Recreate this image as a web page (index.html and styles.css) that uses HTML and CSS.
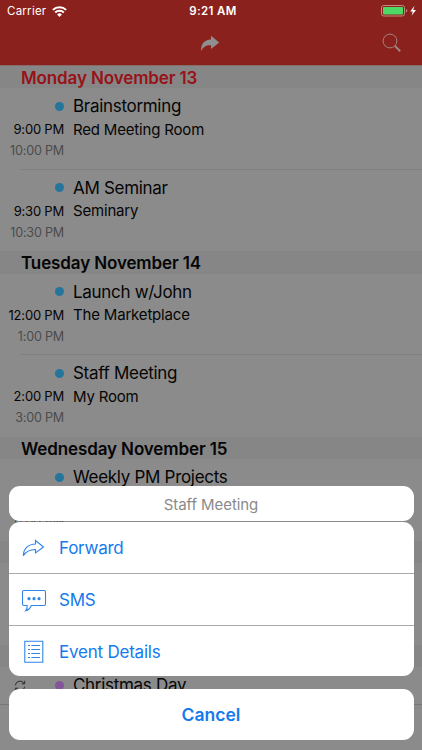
FILE: index.html
```
<!DOCTYPE html>
<html lang="en">
<head>
<meta charset="utf-8">
<title>Calendar</title>
<link rel="stylesheet" href="styles.css">
</head>
<body>
<div class="screen">
  <header class="header">
    <div class="status">
      <div class="carrier"><span>Carrier</span>
        <svg width="15" height="11" viewBox="0 0 15 11"><g fill="none" stroke="#fff" stroke-width="2"><path d="M.9 3.9a9.4 9.4 0 0 1 13.2 0"/><path d="M3.2 6.5a6.1 6.1 0 0 1 8.6 0"/></g><path d="M7.5 10.9 5.1 8.4a3.4 3.4 0 0 1 4.8 0z" fill="#fff"/></svg>
      </div>
      <div class="clock">9:21 AM</div>
      <div class="battery">
        <svg width="36" height="12" viewBox="0 0 36 12"><rect x=".5" y=".5" width="23" height="10.5" rx="2.2" fill="none" stroke="#c58c80"/><rect x="2" y="2" width="20" height="7.5" rx=".8" fill="#4cd964"/><path d="M25 4v3.5q1.3-.5 1.3-1.75T25 4z" fill="#c58c80"/><path d="M33.5.8 29.2 6.5h2.6l-1.3 4.3L35 5h-2.8z" fill="#fff"/></svg>
      </div>
    </div>
    <div class="nav">
      <svg class="share" width="20" height="17" viewBox="0 0 20 17"><path d="M11 .8 19.2 7.5 11 14v-3.7C6.2 10 3 11.8 1.2 16.3.6 9.3 4.2 4.7 11 4.5z" fill="#8f8f8f"/></svg>
      <svg class="search" width="20" height="20" viewBox="0 0 20 20" fill="none" stroke="#a3827e"><circle cx="8" cy="8" r="6.9" stroke-width="1"/><path d="m13 13 5.2 5.2" stroke-width="2"/></svg>
    </div>
  </header>
  <main class="agenda">
    <h2 class="day today">Monday November 13</h2>
    <div class="event"><i class="dot"></i><b class="title">Brainstorming</b><span class="start">9:00 PM</span><span class="place">Red Meeting Room</span><span class="end">10:00 PM</span></div>
    <div class="event"><i class="dot"></i><b class="title">AM Seminar</b><span class="start">9:30 PM</span><span class="place">Seminary</span><span class="end">10:30 PM</span></div>
    <h2 class="day">Tuesday November 14</h2>
    <div class="event"><i class="dot"></i><b class="title">Launch w/John</b><span class="start">12:00 PM</span><span class="place">The Marketplace</span><span class="end">1:00 PM</span></div>
    <div class="event"><i class="dot"></i><b class="title">Staff Meeting</b><span class="start">2:00 PM</span><span class="place">My Room</span><span class="end">3:00 PM</span></div>
    <h2 class="day">Wednesday November 15</h2>
    <div class="event"><i class="dot"></i><b class="title">Weekly PM Projects</b><span class="start"></span><span class="place"></span><span class="end">11:00 AM</span></div>
    <h2 class="day"></h2>
    <div class="event"></div>
    <h2 class="day"></h2>
    <div class="event allday"><svg class="repeat" width="12" height="12" viewBox="0 0 12 12" fill="none" stroke="#2b2b2b"><path d="M1.3 5.3A4.8 4.8 0 0 1 10 3.2M10.7.8v3H7.8M10.7 6.7A4.8 4.8 0 0 1 2 8.8M1.3 11.2v-3h2.9"/></svg><i class="dot purple"></i><b class="title">Christmas Day</b></div>
  </main>
</div>
<div class="sheet">
  <div class="caption">Staff Meeting</div>
  <div class="actions">
    <div class="action">
      <svg width="26" height="24" viewBox="0 0 26 24"><path d="M14.5 4.5 22.5 11l-8 6v-3.5c-6 0-9.5 1.5-12.2 6.3C2.5 12.5 7.5 8.1 14.5 8z"/></svg>
      <span>Forward</span>
    </div>
    <div class="action">
      <svg width="26" height="24" viewBox="0 0 26 24"><path d="M3 2.5h20q1.5 0 1.5 1.5v12q0 1.5-1.5 1.5H10.3Q8.5 22 4.7 22.7q1.8-2.1 1.5-5.2H3q-1.5 0-1.5-1.5V4Q1.5 2.5 3 2.5z"/><g class="solid"><circle cx="8" cy="10.7" r="1.6"/><circle cx="13" cy="10.7" r="1.6"/><circle cx="18" cy="10.7" r="1.6"/></g></svg>
      <span>SMS</span>
    </div>
    <div class="action">
      <svg width="26" height="24" viewBox="0 0 26 24"><path d="M3.8 1.2h18v21h-18z"/><path d="M7 5.5h2M7 9.5h2M7 13.5h2M7 17.5h2M10.3 5.5H19M10.3 9.5H19M10.3 13.5H19M10.3 17.5H19"/></svg>
      <span>Event Details</span>
    </div>
  </div>
  <div class="cancel">Cancel</div>
</div>
</body>
</html>
```
FILE: styles.css
```
* { box-sizing: border-box; }
body { margin: 0; width: 422px; height: 750px; overflow: hidden; position: relative; background: #8b8b8b; font-family: Inter, "Liberation Sans", sans-serif; color: #050505; }
svg { display: block; }
.screen { height: 750px; overflow: hidden; }
.header { height: 65.5px; background: #8b211c; border-bottom: 1px solid #866d6c; }
.status { height: 22px; display: grid; grid-template-columns: 1fr 1fr 1fr; align-items: center; color: #fff; font-size: 11.5px; }
.carrier { display: flex; align-items: center; gap: 6px; padding-left: 7px; letter-spacing: .25px; }
.clock { text-align: center; font-weight: 600; padding-left: 4px; letter-spacing: .35px; }
.battery { display: flex; justify-content: flex-end; padding-right: 5px; }
.nav { height: 42px; display: grid; grid-template-columns: 1fr 20px 1fr; align-items: center; }
.share { grid-column: 2; margin-left: -1px; }
.search { justify-self: end; margin-right: 20px; }
.day { margin: 0; height: 22.5px; padding-left: 21px; background: #868686; font-size: 17px; font-weight: 600; line-height: 24px; letter-spacing: -.12px; white-space: nowrap; }
.today { color: #981217; }
.event { height: 81.5px; display: grid; grid-template-columns: 64px 1fr; grid-template-rows: 24px 22px 21px; column-gap: 9px; align-items: center; position: relative; padding-top: 6px; align-content: start; }
.event + .event::before { content: ""; position: absolute; left: 20px; right: 0; top: -1px; height: 1px; background: #808083; }
.dot { width: 9px; height: 9px; border-radius: 50%; background: #25749b; justify-self: end; }
.purple { background: #84559a; }
.title { font-weight: 400; font-size: 17px; letter-spacing: -.3px; white-space: nowrap; }
.place { font-size: 15px; letter-spacing: -.18px; white-space: nowrap; }
.start, .end { font-size: 13px; letter-spacing: -.2px; text-align: right; white-space: nowrap; }
.end { color: #4b4b4b; font-size: 12.6px; }
.allday { height: 38px; border-bottom: 1px solid #777; }
.repeat { position: absolute; left: 14px; top: 13px; }
.sheet { position: absolute; left: 8.5px; right: 8.5px; top: 486px; display: flex; flex-direction: column; }
.caption, .actions, .cancel { background: #fff; border-radius: 11px; }
.caption { height: 35px; line-height: 37px; text-align: center; font-size: 15px; letter-spacing: -.07px; color: #8a8a8a; }
.actions { margin-top: 1px; margin-bottom: 13px; height: 154px; overflow: hidden; }
.action { display: flex; align-items: center; height: 51px; gap: 12px; padding-left: 12.5px; font-size: 17px; letter-spacing: -.22px; color: #147aed; }
.action + .action { border-top: 1px solid #aaa; height: 52px; }
.action svg { fill: none; stroke: #3085e9; stroke-width: 1.1; }
.solid { fill: #3085e9; stroke: none; }
.cancel { height: 51px; line-height: 52px; text-align: center; font-size: 17.5px; font-weight: 600; color: #147aed; }
```
